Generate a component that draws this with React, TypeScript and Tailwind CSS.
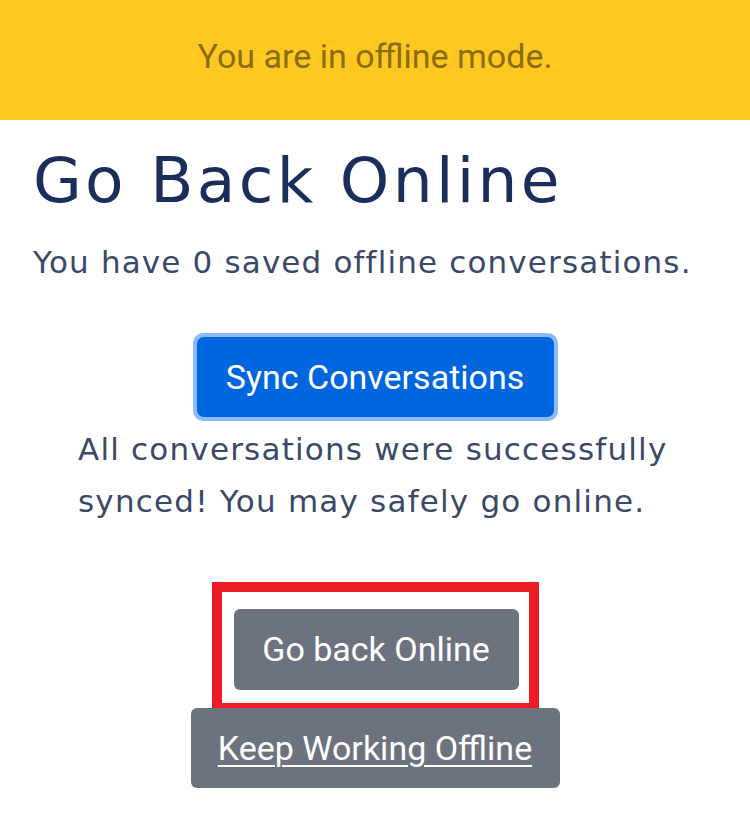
import React from 'react'

const MONT = { fontFamily: '"DejaVu Sans", Inter, sans-serif' }
const ROBO = { fontFamily: 'Roboto, "Liberation Sans", sans-serif' }

export default function App() {
  return (
    <div className="w-[750px] h-[839px] bg-white overflow-hidden">
      <div className="h-[120px] bg-[#ffc820] flex items-center justify-center">
        <p style={ROBO} className="text-[34px] text-[#8a6c12] pb-[8px]">You are in offline mode.</p>
      </div>

      <div style={MONT} className="px-[33px]">
        <h1 className="text-[63px] font-normal text-[#1b2d5a] leading-none mt-[29px] tracking-[3.3px]">Go Back Online</h1>
        <p className="text-[31px] text-[#3b4968] mt-[35px] leading-none tracking-[1.15px]">You have 0 saved offline conversations.</p>
      </div>

      <div className="flex flex-col items-center mt-[55px]">
        <div className="p-[4px] rounded-[10px] bg-[#8cbaf6]">
          <button style={ROBO} className="w-[357px] h-[80px] rounded-[7px] bg-[#0066e0] text-white text-[34px]">
            Sync Conversations
          </button>
        </div>
      </div>

      <p style={MONT} className="pl-[78px] pr-[30px] text-[31px] leading-[52px] text-[#3b4968] mt-[2px] tracking-[1.2px]">
        All conversations were successfully synced! You may safely go online.
      </p>

      <div className="flex flex-col items-center mt-[55px]">
        <div className="border-[10px] border-[#ec1c24] pt-[17px] pb-[13px] pl-[12px] pr-[10px]">
          <button style={ROBO} className="w-[285px] h-[81px] rounded-[6px] bg-[#6c737e] text-white text-[34px]">
            Go back Online
          </button>
        </div>
        <button style={ROBO} className="-mt-[5px] w-[369px] h-[80px] rounded-[6px] bg-[#6c737e] text-white text-[34px] underline underline-offset-[5px] decoration-[2px]">
          Keep Working Offline
        </button>
      </div>
    </div>
  )
}
